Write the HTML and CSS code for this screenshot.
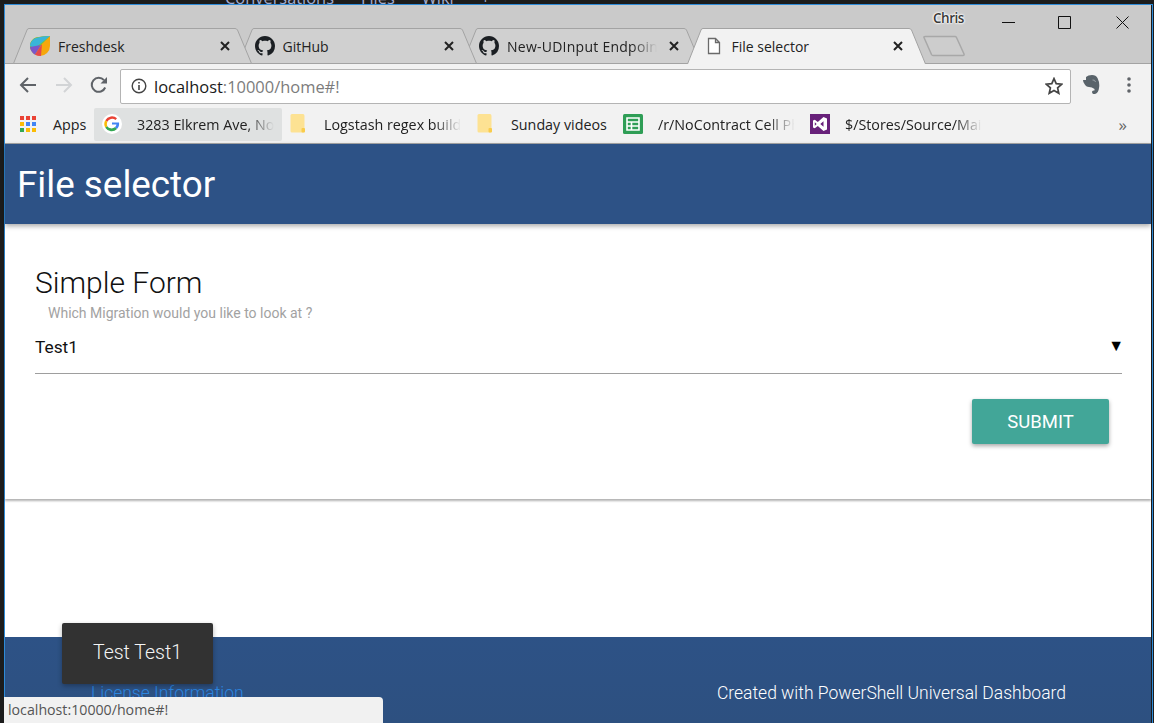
FILE: index.html
```html
<!DOCTYPE html>
<html lang="en">
<head>
<meta charset="utf-8">
<title>File selector</title>
<link rel="stylesheet" href="styles.css">
</head>
<body>
<div class="desktop-strip">
  <span>Conversations</span><span>Files</span><span>Wiki</span><span>+</span>
</div>
<div class="window">
  <div class="tabstrip">
    <div class="tab">
      <svg class="tab-bg" viewBox="0 0 239 36" preserveAspectRatio="none"><path d="M0.5 35.500L14 2Q14.5 .5 16 .5H222Q223.5 .5 224.5 2L238.5 35.500Z" fill="#d0d0d0" stroke="#a3a3a3"/></svg>
      <svg class="favicon" viewBox="0 0 20 20"><path d="M10 20A10 10 0 0 1 0 10C0 5 4 1 9 1Q14 0 20 0Q20 5 20 10A10 10 0 0 1 10 20Z" fill="#f5a70c"/><path d="M0 10C0 5 4 1 9 1Q14 0 20 0Q15 5 12 8L5 18A10 10 0 0 1 0 10Z" fill="#6cc24a"/><path d="M0 10C0 6 3 3 6 2Q12 0 20 0L5 12Z" fill="#39b5d8"/><path d="M0 11L11 9L5 18.700A10 10 0 0 1 0 11Z" fill="#7b57c9"/><path d="M5 18.700L12 8L11 19.900Q8 20 5 18.700Z" fill="#e5484d"/></svg>
      <span class="tab-title">Freshdesk</span>
      <svg class="tab-close" viewBox="0 0 10 10"><path d="M1 1L9 9M9 1L1 9"/></svg>
    </div>
    <div class="tab">
      <svg class="tab-bg" viewBox="0 0 239 36" preserveAspectRatio="none"><path d="M0.5 35.500L14 2Q14.5 .5 16 .5H222Q223.5 .5 224.5 2L238.5 35.500Z" fill="#d0d0d0" stroke="#a3a3a3"/></svg>
      <svg class="favicon" viewBox="0 0 16 16"><path fill="#1b1f23" d="M8 0C3.580 0 0 3.580 0 8c0 3.540 2.290 6.530 5.470 7.590.4.070.55-.17.55-.38 0-.19-.01-.82-.01-1.490-2.010.37-2.530-.49-2.690-.94-.09-.23-.48-.94-.82-1.130-.28-.15-.68-.52-.01-.53.63-.01 1.080.58 1.230.82.72 1.210 1.870.87 2.330.66.07-.52.28-.87.51-1.070-1.780-.2-3.640-.89-3.640-3.950 0-.87.31-1.590.82-2.150-.08-.2-.36-1.020.08-2.120 0 0 .67-.21 2.200.82.64-.18 1.320-.27 2-.27.68 0 1.360.09 2 .27 1.530-1.040 2.200-.82 2.200-.82.44 1.100.16 1.920.08 2.120.51.56.82 1.270.82 2.150 0 3.070-1.870 3.750-3.650 3.950.29.25.54.73.54 1.480 0 1.070-.01 1.930-.01 2.200 0 .21.15.46.55.38A8.013 8.013 0 0 0 16 8c0-4.420-3.580-8-8-8z"/></svg>
      <span class="tab-title">GitHub</span>
      <svg class="tab-close" viewBox="0 0 10 10"><path d="M1 1L9 9M9 1L1 9"/></svg>
    </div>
    <div class="tab">
      <svg class="tab-bg" viewBox="0 0 239 36" preserveAspectRatio="none"><path d="M0.5 35.500L14 2Q14.5 .5 16 .5H222Q223.5 .5 224.5 2L238.5 35.500Z" fill="#d0d0d0" stroke="#a3a3a3"/></svg>
      <svg class="favicon" viewBox="0 0 16 16"><path fill="#1b1f23" d="M8 0C3.580 0 0 3.580 0 8c0 3.540 2.290 6.530 5.470 7.590.4.070.55-.17.55-.38 0-.19-.01-.82-.01-1.490-2.010.37-2.530-.49-2.690-.94-.09-.23-.48-.94-.82-1.130-.28-.15-.68-.52-.01-.53.63-.01 1.080.58 1.230.82.72 1.210 1.870.87 2.330.66.07-.52.28-.87.51-1.070-1.780-.2-3.640-.89-3.640-3.950 0-.87.31-1.590.82-2.150-.08-.2-.36-1.020.08-2.120 0 0 .67-.21 2.200.82.64-.18 1.320-.27 2-.27.68 0 1.360.09 2 .27 1.530-1.040 2.200-.82 2.200-.82.44 1.100.16 1.920.08 2.120.51.56.82 1.270.82 2.150 0 3.070-1.870 3.750-3.650 3.950.29.25.54.73.54 1.480 0 1.070-.01 1.930-.01 2.200 0 .21.15.46.55.38A8.013 8.013 0 0 0 16 8c0-4.420-3.580-8-8-8z"/></svg>
      <span class="tab-title tab-title-fade">New-UDInput Endpoint</span>
      <svg class="tab-close" viewBox="0 0 10 10"><path d="M1 1L9 9M9 1L1 9"/></svg>
    </div>
    <div class="tab tab-active">
      <svg class="tab-bg" viewBox="0 0 239 36" preserveAspectRatio="none"><path d="M0.5 36L14 2Q14.5 .5 16 .5H222Q223.5 .5 224.5 2L238.5 36" fill="#f2f2f2" stroke="#a3a3a3"/></svg>
      <svg class="favicon" viewBox="0 0 20 20"><path d="M4.500 2.500H11.500L15.500 6.500V17.500H4.500ZM11.500 2.500V6.500H15.500" fill="#fff" stroke="#6a6a6a" stroke-width="1.300"/></svg>
      <span class="tab-title">File selector</span>
      <svg class="tab-close" viewBox="0 0 10 10"><path d="M1 1L9 9M9 1L1 9"/></svg>
    </div>
    <svg class="newtab" viewBox="0 0 44 22"><path d="M2 2.500Q1.500 1.500 3 1.500H33Q34 1.500 34.500 2.500L42 19Q42.500 20.500 41 20.500H11Q10 20.500 9.500 19.500Z" fill="#cdcdcd" stroke="#a8a8a8" stroke-width="1.500"/></svg>
    <div class="profile">Chris</div>
    <div class="winctl">
      <svg viewBox="0 0 13 13"><path d="M0 6.500H13"/></svg>
      <svg viewBox="0 0 13 13"><path d="M.5 .5H12.500V12.500H.5Z"/></svg>
      <svg viewBox="0 0 13 13"><path d="M.5 .5L12.500 12.500M12.500 .5L.5 12.500"/></svg>
    </div>
  </div>

  <div class="toolbar">
    <svg class="nav-icon" viewBox="0 0 18 18"><path d="M17 9H2M9 2L2 9L9 16" fill="none" stroke="#5f6368" stroke-width="2"/></svg>
    <svg class="nav-icon nav-forward" viewBox="0 0 18 18"><path d="M1 9H16M9 2L16 9L9 16" fill="none" stroke="#d2d4d6" stroke-width="2"/></svg>
    <svg class="nav-icon nav-reload" viewBox="0 0 18 18"><path d="M15.200 11.500A7 7 0 1 1 14 4.200" fill="none" stroke="#5f6368" stroke-width="2"/><path d="M10.500 7.500H17V1Z" fill="#5f6368"/></svg>
    <div class="omnibox">
      <svg class="info-icon" viewBox="0 0 16 16"><circle cx="8" cy="8" r="6.800" fill="none" stroke="#444" stroke-width="1.400"/><path d="M8 7V12M8 4V5.600" stroke="#444" stroke-width="1.600"/></svg>
      <span class="url">localhost<span class="url-rest">:10000/home#!</span></span>
      <svg class="star" viewBox="0 0 18 18"><path d="M9 1.600L11.200 6.700L16.800 7.200L12.600 10.900L13.800 16.300L9 13.500L4.200 16.300L5.400 10.900L1.200 7.200L6.800 6.700Z" fill="none" stroke="#444" stroke-width="1.700"/></svg>
    </div>
    <svg class="evernote" viewBox="0 0 17 19"><path d="M3 2Q5 0 9 0Q13 0 14.500 3Q17 8 16 13Q15.500 18 12 19Q9 19.500 9 17Q9 15 11.500 15.500L11.500 14Q9 12 6 12Q3 12 1.500 9Q0 7 0 5L3 5Z" fill="#59636a"/><path d="M9.500 5Q12 4.500 12.500 7" fill="none" stroke="#9aa2a7"/></svg>
    <svg class="menu-dots" viewBox="0 0 4 16"><circle cx="2" cy="2" r="1.800"/><circle cx="2" cy="8" r="1.800"/><circle cx="2" cy="14" r="1.800"/></svg>
  </div>

  <div class="bookmarks">
    <div class="bm bm-apps">
      <svg class="apps-icon" viewBox="0 0 16 16">
        <rect x="0" y="0" width="4" height="4" fill="#ea4335"/><rect x="6" y="0" width="4" height="4" fill="#ea4335"/><rect x="12" y="0" width="4" height="4" fill="#ea4335"/>
        <rect x="0" y="6" width="4" height="4" fill="#fbbc05"/><rect x="6" y="6" width="4" height="4" fill="#4285f4"/><rect x="12" y="6" width="4" height="4" fill="#4285f4"/>
        <rect x="0" y="12" width="4" height="4" fill="#34a853"/><rect x="6" y="12" width="4" height="4" fill="#fbbc05"/><rect x="12" y="12" width="4" height="4" fill="#fbbc05"/>
      </svg>
      <span>Apps</span>
    </div>
    <div class="bm bm-hover">
      <svg class="bm-icon" viewBox="0 0 20 20"><circle cx="10" cy="10" r="10" fill="#fff"/><path d="M15.500 10.500H10V8.600H17A7.200 7.200 0 0 1 15 15L12.800 13.300A4 4 0 0 0 14.500 10.500Z" fill="#4285f4"/><path d="M5.300 7.800A5.300 5.300 0 0 1 13.500 6L15 4.300A7.500 7.500 0 0 0 3.300 6.300Z" fill="#ea4335"/><path d="M5.300 7.800A5.300 5.300 0 0 0 5.300 12.200L3.300 13.700A7.500 7.500 0 0 1 3.300 6.300Z" fill="#fbbc05"/><path d="M5.300 12.200A5.300 5.300 0 0 0 12.800 13.300L15 15A7.500 7.500 0 0 1 3.300 13.700Z" fill="#34a853"/></svg>
      <span class="bm-label">3283 Elkrem Ave, North Port</span>
    </div>
    <div class="bm">
      <svg class="bm-icon" viewBox="0 0 20 20"><path d="M1.500 1.500Q1.500 0 3 0H14Q15.500 0 15.500 2V17Q15.500 18.500 14 18.500H3Q1.500 18.500 1.500 17Z" fill="#fde293"/><rect x="12.500" y="14" width="3.500" height="4.500" rx="1" fill="#f9cc4c"/></svg>
      <span class="bm-label">Logstash regex builder</span>
    </div>
    <div class="bm bm-short">
      <svg class="bm-icon" viewBox="0 0 20 20"><path d="M1.500 1.500Q1.500 0 3 0H14Q15.500 0 15.500 2V17Q15.500 18.500 14 18.500H3Q1.500 18.500 1.500 17Z" fill="#fde293"/><rect x="12.500" y="14" width="3.500" height="4.500" rx="1" fill="#f9cc4c"/></svg>
      <span>Sunday videos</span>
    </div>
    <div class="bm">
      <svg class="bm-icon" viewBox="0 0 20 20"><rect width="20" height="20" rx="1.500" fill="#2f9e56"/><path d="M4 4H16V16H4ZM4 8H16M4 12H16M8.500 8V16" fill="none" stroke="#fff" stroke-width="1.600"/></svg>
      <span class="bm-label">/r/NoContract Cell Phone</span>
    </div>
    <div class="bm">
      <svg class="bm-icon" viewBox="0 0 20 20"><rect width="20" height="20" fill="#68217a"/><path d="M13.500 3L17 4.500V15.500L13.500 17L7.800 12L4.800 14.300L3 13.400V6.600L4.800 5.700L7.800 8ZM13.500 7.300L10.300 10L13.500 12.700ZM4.800 8.200V11.800L6.700 10Z" fill="#fff" fill-rule="evenodd"/></svg>
      <span class="bm-label">$/Stores/Source/Main/Web</span>
    </div>
    <div class="bm-more">»</div>
  </div>

  <div class="page">
    <header class="appbar"><h1>File selector</h1></header>
    <main class="content">
      <section class="card">
        <h2>Simple Form</h2>
        <div class="field-label">Which Migration would you like to look at ?</div>
        <div class="select"><span>Test1</span><span class="caret">▼</span></div>
        <div class="actions"><button class="submit">SUBMIT</button></div>
      </section>
    </main>
    <footer class="footer">
      <a class="license">License Information</a>
      <span class="credit">Created with PowerShell Universal Dashboard</span>
    </footer>
    <div class="toast">Test Test1</div>
    <div class="status">localhost:10000/home#!</div>
  </div>
</div>
</body>
</html>
```
FILE: styles.css
```css
* { box-sizing: border-box; }
html, body { margin: 0; height: 100%; }
body {
  width: 1154px;
  height: 723px;
  overflow: hidden;
  background: #1c1c1c;
  font-family: "Open Sans", "Noto Sans", sans-serif;
  display: flex;
  flex-direction: column;
}
.desktop-strip {
  height: 4px;
  flex: none;
  overflow: hidden;
  display: flex;
  gap: 27px;
  padding-left: 225px;
  color: #a3add0;
  font: 16.400px/1 "Open Sans", sans-serif;
  background: #1c1c1c;
}
.desktop-strip span { margin-top: -10px; }
.window {
  flex: 1;
  min-height: 0;
  margin: 0 1px 0 4px;
  padding-right: 1px;
  border-top: 1px solid #2e8bd8;
  border-left: 1px solid #2e8bd8;
  border-right: 1px solid #2e8bd8;
  display: flex;
  flex-direction: column;
}
.tabstrip {
  height: 59px;
  flex: none;
  background: #cacaca;
  border-bottom: 1px solid #a3a3a3;
  display: flex;
  align-items: flex-end;
  padding-left: 8px;
  position: relative;
}
.tab {
  width: 239px;
  height: 36px;
  margin: 0 -14.5px -1px 0;
  position: relative;
  flex: none;
  display: flex;
  align-items: center;
  padding-left: 17px;
  font-size: 14px;
  color: #222;
}
.tab:nth-child(1) { z-index: 3; }
.tab:nth-child(2) { z-index: 2; }
.tab:nth-child(3) { z-index: 1; }
.tab-bg { position: absolute; inset: 0; width: 100%; height: 100%; }
.tab-active { z-index: 4; }
.favicon { position: relative; width: 20px; height: 20px; flex: none; margin-right: 8px; }
.tab-title {
  position: relative;
  width: 158px;
  white-space: nowrap;
  overflow: hidden;
  flex: none;
}
.tab-title-fade {
  letter-spacing: .25px;
  -webkit-mask-image: linear-gradient(to right, #000 125px, transparent 150px);
  mask-image: linear-gradient(to right, #000 125px, transparent 150px);
}
.tab-close {
  position: relative;
  width: 10px;
  height: 10px;
  flex: none;
  margin-left: 3.500px;
  fill: none;
  stroke: #222;
  stroke-width: 2;
}
.newtab { width: 44px; height: 22px; flex: none; margin: 0 0 6px 11px; position: relative; z-index: 1; }
.profile {
  align-self: flex-start;
  margin: 4px 0 0 -33px;
  width: 34px;
  font-size: 13.500px;
  font-weight: 600;
  color: #3a3a3a;
  text-shadow: 0 0 1px #fff, 0 0 2px #fff, 0 0 2px #fff, 0 0 3px #fff;
  letter-spacing: -.5px;
  white-space: nowrap;
}
.winctl {
  align-self: flex-start;
  margin: 11px 0 0 auto;
  padding-right: 22px;
  display: flex;
  gap: 44px;
}
.winctl svg { width: 13px; height: 13px; fill: none; stroke: #111; stroke-width: 1; }
.winctl svg:nth-child(2) { margin: 0 1px 0 -1px; }
.toolbar {
  height: 41px;
  flex: none;
  background: #f2f2f2;
  display: flex;
  align-items: center;
  padding-left: 14px;
}
.nav-icon { width: 18px; height: 18px; flex: none; margin-right: 17.500px; }
.omnibox {
  width: 951px;
  height: 35px;
  flex: none;
  margin: 3px 0 0 -5.500px;
  background: #fff;
  border: 1px solid #b4b4b4;
  border-radius: 2px;
  display: flex;
  align-items: center;
  padding: 0 7px 0 10px;
}
.info-icon { width: 16px; height: 16px; flex: none; margin-right: 7px; }
.url { font-size: 16.450px; color: #1a1a1a; white-space: nowrap; }
.url-rest { color: #7c7c7c; }
.star { width: 18px; height: 18px; margin-left: auto; flex: none; }
.evernote { width: 17px; height: 19px; flex: none; margin-left: 12px; }
.menu-dots { width: 4px; height: 16px; flex: none; margin-left: 27px; fill: #5f6368; }
.bookmarks {
  height: 39px;
  flex: none;
  background: #f2f2f2;
  border-bottom: 1px solid #a8a8a8;
  display: flex;
  align-items: center;
  padding-left: 15px;
  font-size: 14.300px;
  color: #222;
  position: relative;
}
.bm {
  width: 187px;
  height: 33px;
  flex: none;
  display: flex;
  align-items: center;
  gap: 15px;
  padding: 0 8px;
  border-radius: 2px;
  white-space: nowrap;
}
.bm-apps { width: 74px; padding: 0; gap: 17px; }
.bm-short { width: 147px; }
.bm-hover { background: #dfe1e1; width: 188px; margin-right: -1px; }
.bm-icon { width: 20px; height: 20px; flex: none; }
.apps-icon { width: 16px; height: 16px; flex: none; }
.bm-label {
  width: 137px;
  overflow: hidden;
  -webkit-mask-image: linear-gradient(to right, #000 110px, transparent 137px);
  mask-image: linear-gradient(to right, #000 110px, transparent 137px);
}
.bm-more { margin-left: auto; padding-right: 24px; color: #666; font-size: 17px; }
.page {
  flex: 1;
  min-height: 0;
  background: #fff;
  display: flex;
  flex-direction: column;
  position: relative;
  font-family: Roboto, sans-serif;
}
.appbar {
  height: 80px;
  flex: none;
  background: #2d5286;
  display: flex;
  align-items: center;
  padding-left: 12px;
  box-shadow: 0 2px 5px rgba(0,0,0,.35);
  position: relative;
  z-index: 1;
}
.appbar h1 { margin: 0; font-size: 36.800px; font-weight: 400; color: #fff; }
.content { flex: 1; min-height: 0; }
.card {
  height: 275px;
  padding: 41px 30px 0;
  box-shadow: 0 2px 2px rgba(0,0,0,.3);
}
.card h2 { margin: 0; font-size: 30px; font-weight: 300; line-height: 36px; color: #111; }
.field-label { margin: 3px 0 0 13px; font-size: 14px; line-height: 18px; color: #a2a2a2; }
.select {
  height: 52px;
  margin-right: -1px;
  padding-top: 13px;
  border-bottom: 1px solid #9e9e9e;
  display: flex;
  justify-content: space-between;
  font-size: 17.300px;
  line-height: 24px;
  color: #111;
}
.caret { font-size: 16px; color: #000; margin-right: -2px; margin-top: -1px; }
.actions { display: flex; justify-content: flex-end; margin-top: 25px; padding-right: 12px; }
.submit {
  width: 137px;
  height: 45px;
  border: 0;
  border-radius: 2px;
  background: #42a698;
  color: #fff;
  font: 400 18.500px Roboto, sans-serif;
  box-shadow: 0 2px 4px rgba(0,0,0,.35);
}
.footer {
  height: 86px;
  flex: none;
  background: linear-gradient(#2d5286, #2d5080);
  padding: 43px 85px 0 86px;
  display: flex;
  justify-content: space-between;
  font-size: 17.500px;
  font-weight: 300;
  line-height: 26px;
}
.license { color: #2b85e0; }
.credit { color: #fff; }
.toast {
  position: absolute;
  left: 57px;
  bottom: 39px;
  width: 151px;
  height: 61px;
  padding-bottom: 3px;
  background: #323232;
  color: #f5f5f5;
  border-radius: 2px;
  font-size: 19.500px;
  font-weight: 300;
  display: flex;
  align-items: center;
  justify-content: center;
  box-shadow: 0 2px 5px rgba(0,0,0,.3);
}
.status {
  position: absolute;
  left: -1px;
  bottom: 0;
  width: 379px;
  height: 26px;
  background: #f1f1f1;
  border-top-right-radius: 4px;
  padding-left: 4px;
  font: 14.200px/26px "Open Sans", sans-serif;
  color: #555;
}
```
